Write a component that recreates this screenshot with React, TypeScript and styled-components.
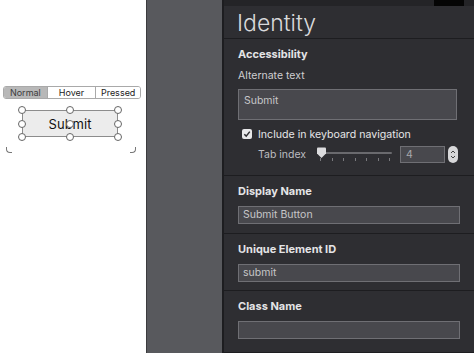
import React from 'react';
import styled, { createGlobalStyle } from 'styled-components';

const GlobalStyle = createGlobalStyle`
  html, body {
    margin: 0;
    padding: 0;
    background: #ffffff;
  }
  body {
    font-family: Inter, "Liberation Sans", sans-serif;
  }
`;

const Page = styled.div`
  display: flex;
  width: 474px;
  height: 353px;
  overflow: hidden;
`;

const Canvas = styled.div`
  width: 146px;
  background: #ffffff;
  padding-top: 86px;
  box-sizing: border-box;
`;

const Segmented = styled.div`
  display: flex;
  margin-left: 3px;
  width: 138px;
  height: 13px;
  border: 1px solid #a9a9a9;
  border-radius: 3px;
  overflow: hidden;
  box-sizing: border-box;
`;

const Segment = styled.div<{ $active?: boolean; $w: number }>`
  width: ${p => p.$w}px;
  display: flex;
  align-items: center;
  justify-content: center;
  font-size: 9px;
  color: ${p => (p.$active ? '#3c3c3c' : '#222')};
  background: ${p => (p.$active ? '#b8b8b8' : '#fff')};
  border-left: ${p => (p.$active ? 'none' : '1px solid #a9a9a9')};
`;

const Stage = styled.div`
  position: relative;
  margin: 11px 0 0 22px;
  width: 96px;
  height: 27px;
`;

const ButtonFace = styled.div`
  width: 100%;
  height: 100%;
  background: #ececec;
  border: 1px solid #8c8c8c;
  box-sizing: border-box;
  display: flex;
  align-items: center;
  justify-content: center;
  font-size: 13px;
  color: #111;
`;

const Handle = styled.span<{ $x: string; $y: string }>`
  position: absolute;
  left: ${p => p.$x};
  top: ${p => p.$y};
  width: 6px;
  height: 6px;
  margin: -4px 0 0 -4px;
  border: 1px solid #666;
  border-radius: 50%;
  background: #fff;
`;

const FrameCorners = styled.div`
  display: flex;
  justify-content: space-between;
  margin: 10px 10px 0 6px;
  height: 6px;
`;

const Corner = styled.span<{ $right?: boolean }>`
  width: 5px;
  height: 5px;
  border-bottom: 1px solid #777;
  ${p => (p.$right ? 'border-right: 1px solid #777;' : 'border-left: 1px solid #777;')}
  border-radius: ${p => (p.$right ? '0 0 4px 0' : '0 0 0 4px')};
`;

const GrayPane = styled.div`
  width: 75px;
  background: #58595d;
  border-left: 1px solid #3b3b3e;
`;

const Inspector = styled.div`
  flex: 1;
  background: #2e2e32;
  border-left: 2px solid #1d1d20;
  display: flex;
  flex-direction: column;
  color: #e2e2e4;
`;

const TopStrip = styled.div`
  height: 6px;
  background: #242427;
  display: flex;
  justify-content: flex-end;
  padding-right: 10px;
`;

const BlackTab = styled.div`
  width: 30px;
  background: #050505;
`;

const Title = styled.div`
  height: 32px;
  padding-left: 13px;
  font-size: 23px;
  font-weight: 300;
  line-height: 34px;
  color: #d9d9db;
  border-bottom: 1px solid #1d1d20;
`;

const Section = styled.div<{ $h: number }>`
  height: ${p => p.$h}px;
  padding: 0 13px 0 14px;
  border-bottom: 1px solid #1d1d20;
  box-sizing: border-box;
`;

const Heading = styled.div`
  font-size: 11px;
  font-weight: 700;
  color: #e4e4e6;
  padding-top: 8px;
  height: 14px;
`;

const Label = styled.div`
  font-size: 10.5px;
  color: #cfcfd1;
  margin-top: 8px;
`;

const Field = styled.div<{ $h?: number; $w?: number }>`
  margin-top: ${p => (p.$h ? 7 : 8)}px;
  width: ${p => p.$w ?? 222}px;
  height: ${p => p.$h ?? 18}px;
  background: #48484d;
  border: 1px solid #6f6f74;
  box-sizing: border-box;
  font-size: 10.5px;
  color: #c6c6c8;
  padding: ${p => (p.$h ? '3px 5px' : '0 4px')};
  line-height: 16px;
`;

const CheckRow = styled.div`
  display: flex;
  align-items: center;
  gap: 6px;
  margin: 8px 0 0 4px;
  font-size: 10.6px;
  color: #e6e6e8;
  white-space: nowrap;
`;

const CheckBox = styled.span`
  width: 10px;
  height: 10px;
  border-radius: 2px;
  background: #e8e8ea;
  display: flex;
  align-items: center;
  justify-content: center;
`;

const TabRow = styled.div`
  display: flex;
  align-items: center;
  margin: 5px 0 0 20px;
  font-size: 10.5px;
  color: #bdbdc0;
  white-space: nowrap;
`;

const TabLabel = styled.span`
  width: 52px;
  flex-shrink: 0;
`;

const Slider = styled.div`
  position: relative;
  flex-shrink: 0;
  width: 76px;
  height: 16px;
  margin-left: 6px;
`;

const Track = styled.div`
  position: absolute;
  left: 2px;
  right: 0;
  top: 6px;
  height: 2px;
  background: #6a6a6e;
  border-radius: 1px;
`;

const Ticks = styled.div`
  position: absolute;
  left: 4px;
  right: 2px;
  top: 12px;
  display: flex;
  justify-content: space-between;
`;

const Tick = styled.span`
  width: 1px;
  height: 3px;
  background: #7a7a7e;
`;

const NumberBox = styled.div`
  flex-shrink: 0;
  width: 45px;
  height: 17px;
  margin-left: 8px;
  background: #48484d;
  border: 1px solid #6f6f74;
  box-sizing: border-box;
  padding-left: 5px;
  line-height: 15px;
  font-size: 10.5px;
  color: #a9a9ac;
`;

const Stepper = styled.div`
  flex-shrink: 0;
  width: 10px;
  height: 17px;
  margin-left: 3px;
  border-radius: 5px;
  background: #d8d8da;
  display: flex;
  align-items: center;
  justify-content: center;
`;

const handles: [string, string][] = [
  ['0%', '0%'], ['50%', '0%'], ['100%', '0%'],
  ['0%', '50%'], ['100%', '50%'],
  ['0%', '100%'], ['50%', '100%'], ['100%', '100%'],
];

export default function App() {
  return (
    <>
      <GlobalStyle />
      <Page>
        <Canvas>
          <Segmented>
            <Segment $active $w={44}>Normal</Segment>
            <Segment $w={49}>Hover</Segment>
            <Segment $w={45}>Pressed</Segment>
          </Segmented>
          <Stage>
            <ButtonFace>Submit</ButtonFace>
            {handles.map(([x, y]) => (
              <Handle key={x + y} $x={x} $y={y} />
            ))}
            <Handle $x="50%" $y="50%" />
          </Stage>
          <FrameCorners>
            <Corner />
            <Corner $right />
          </FrameCorners>
        </Canvas>
        <GrayPane />
        <Inspector>
          <TopStrip>
            <BlackTab />
          </TopStrip>
          <Title>Identity</Title>
          <Section $h={138}>
            <Heading>Accessibility</Heading>
            <Label>Alternate text</Label>
            <Field $h={31} $w={219}>Submit</Field>
            <CheckRow>
              <CheckBox>
                <svg width="8" height="8" viewBox="0 0 8 8">
                  <path d="M1.3 4.2 L3.2 6.1 L6.8 1.6" fill="none" stroke="#2e2e32" strokeWidth="1.5" />
                </svg>
              </CheckBox>
              Include in keyboard navigation
            </CheckRow>
            <TabRow>
              <TabLabel>Tab index</TabLabel>
              <Slider>
                <Track />
                <Ticks>
                  {Array.from({ length: 7 }).map((_, i) => (
                    <Tick key={i} />
                  ))}
                </Ticks>
                <svg width="11" height="12" viewBox="0 0 11 12" style={{ position: 'absolute', left: 0, top: 1 }}>
                  <path d="M1 1.5 Q1 0.5 2 0.5 H9 Q10 0.5 10 1.5 V6.5 L5.5 11 L1 6.5 Z" fill="#dcdcde" />
                </svg>
              </Slider>
              <NumberBox>4</NumberBox>
              <Stepper>
                <svg width="6" height="11" viewBox="0 0 6 11">
                  <path d="M1 4 L3 2 L5 4 M1 7 L3 9 L5 7" fill="none" stroke="#444" strokeWidth="1" />
                </svg>
              </Stepper>
            </TabRow>
          </Section>
          <Section $h={58}>
            <Heading>Display Name</Heading>
            <Field>Submit Button</Field>
          </Section>
          <Section $h={58}>
            <Heading>Unique Element ID</Heading>
            <Field>submit</Field>
          </Section>
          <Section $h={62}>
            <Heading>Class Name</Heading>
            <Field />
          </Section>
        </Inspector>
      </Page>
    </>
  );
}
